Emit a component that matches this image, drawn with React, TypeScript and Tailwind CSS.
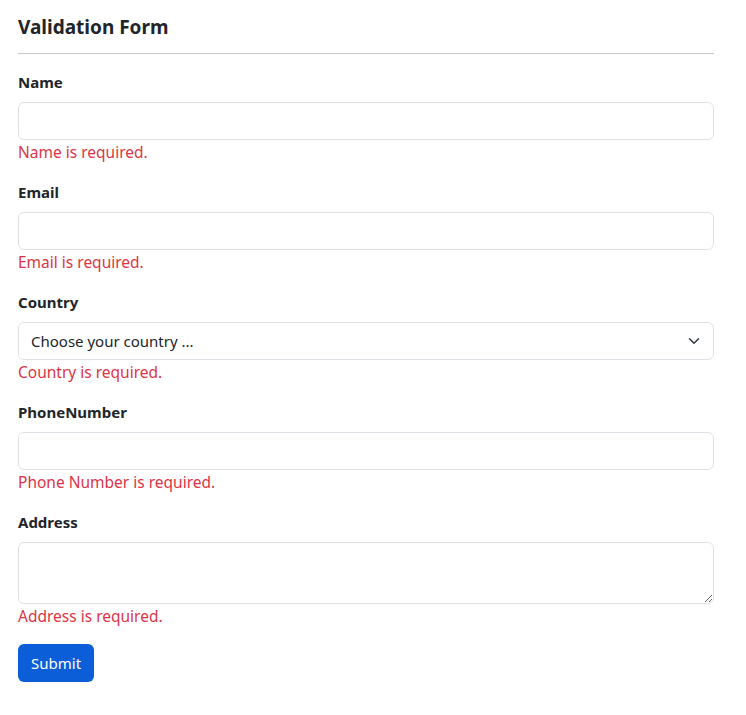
import React from 'react';

const font = { fontFamily: '"Segoe UI", "Noto Sans", "Liberation Sans", sans-serif' };

const Field = ({ label, error, children }: { label: string; error: string; children: React.ReactNode }) => (
  <div className="mb-[18px]">
    <label className="block mb-2 text-[15px] leading-6 font-bold text-[#212529]">{label}</label>
    {children}
    <div className="mt-[2px] text-[15.5px] leading-[20px] text-[#dc3545]">{error}</div>
  </div>
);

const inputCls =
  'block w-full h-[38px] px-3 rounded-[6px] border border-[#dee2e6] bg-white text-[15px] text-[#212529] outline-none';

export default function App() {
  return (
    <div className="bg-white min-h-screen pl-[18px] pr-[32px] pt-[13px]" style={font}>
      <h5 className="text-[19px] leading-[28px] font-bold text-[#212529]">Validation Form</h5>
      <hr className="mt-[12px] mb-[16px] border-t border-[#c8c8c8]" />
      <form onSubmit={(e) => e.preventDefault()}>
        <Field label="Name" error="Name is required.">
          <input type="text" className={inputCls} />
        </Field>
        <Field label="Email" error="Email is required.">
          <input type="email" className={inputCls} />
        </Field>
        <Field label="Country" error="Country is required.">
          <div className="relative">
            <select className={`${inputCls} appearance-none pr-10`} defaultValue="">
              <option value="">Choose your country ...</option>
              <option>USA</option>
              <option>Canada</option>
            </select>
            <svg
              className="absolute right-[14px] top-[13px] pointer-events-none"
              width="12"
              height="12"
              viewBox="0 0 16 16"
              fill="none"
              stroke="#343a40"
              strokeWidth="2"
              strokeLinecap="round"
              strokeLinejoin="round"
            >
              <path d="m2 5 6 6 6-6" />
            </svg>
          </div>
        </Field>
        <Field label="PhoneNumber" error="Phone Number is required.">
          <input type="text" className={inputCls} />
        </Field>
        <Field label="Address" error="Address is required.">
          <textarea rows={2} className="block w-full h-[62px] px-3 py-[6px] rounded-[6px] border border-[#dee2e6] bg-white text-[15px] text-[#212529] outline-none" />
        </Field>
        <button type="submit" className="h-[38px] px-[13px] rounded-[6px] bg-[#0b5ed7] text-white text-[15px] leading-6">
          Submit
        </button>
      </form>
    </div>
  );
}
